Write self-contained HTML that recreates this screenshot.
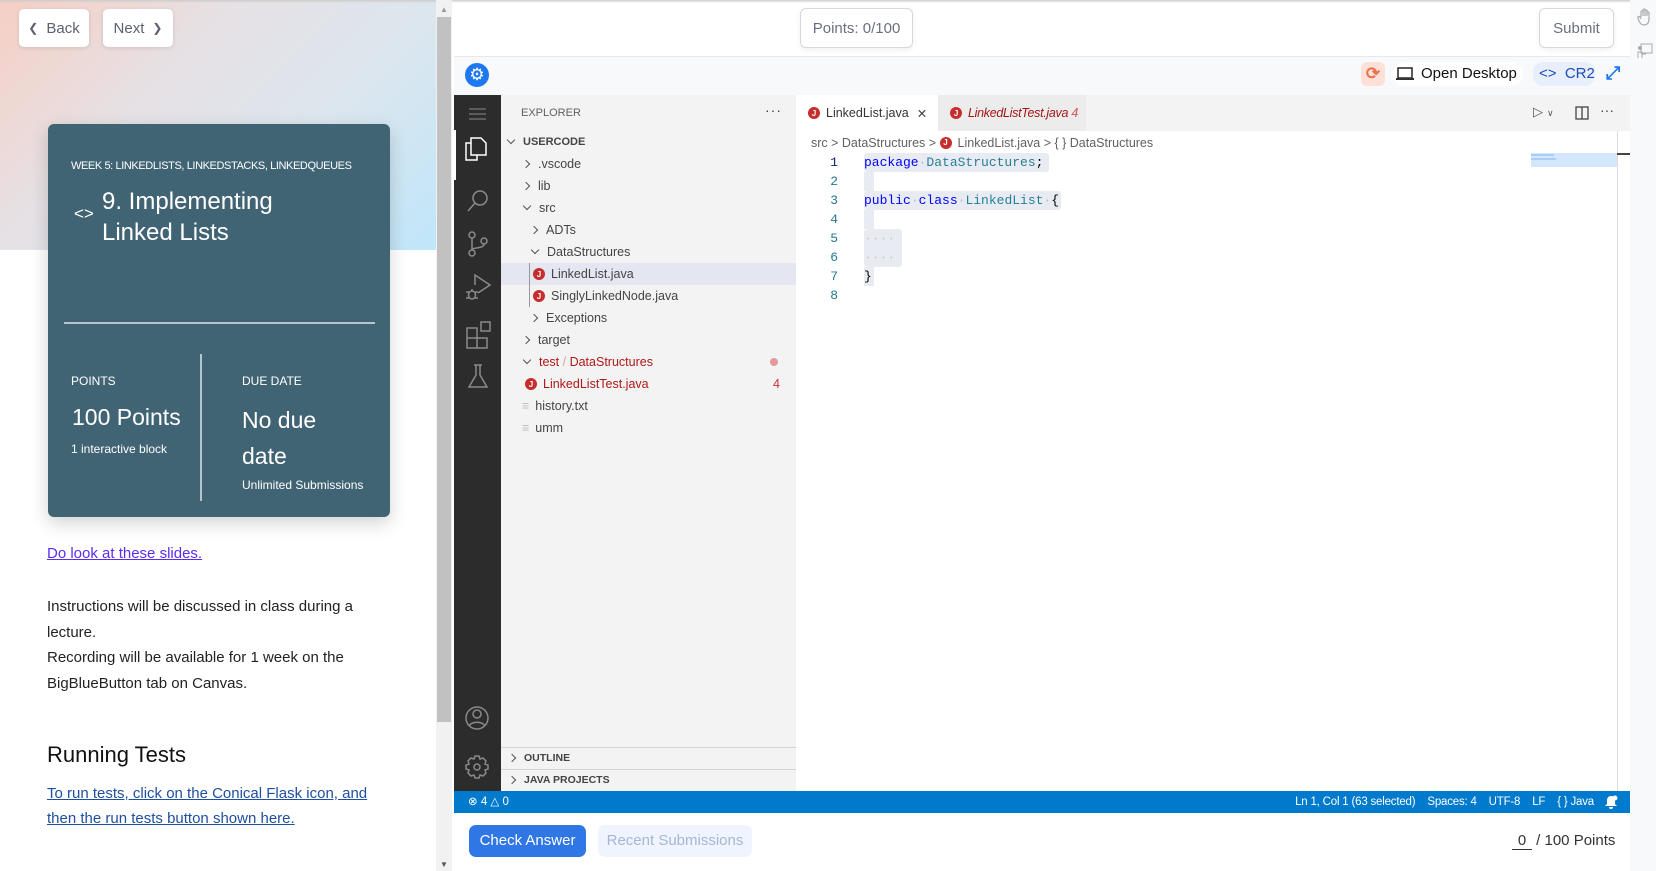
<!DOCTYPE html>
<html><head><meta charset="utf-8"><style>
*{box-sizing:border-box;margin:0;padding:0}
body{width:1656px;height:871px;overflow:hidden;font-family:"Liberation Sans",sans-serif;background:#fff;position:relative}
.a{position:absolute}
.btn{position:absolute;background:#fff;border-radius:5px;box-shadow:0 1px 4px rgba(0,0,0,.12);font-size:15px;color:#5b6170;display:flex;align-items:center;justify-content:center}
.ob{position:absolute;border:1px solid #d6d8dc;border-radius:6px;background:#fff;font-size:15px;color:#6b7080;display:flex;align-items:center;justify-content:center;box-shadow:0 2px 6px rgba(0,0,0,.06)}
.card{color:#fff}
.tree div{position:absolute;font-size:12.5px;color:#444;white-space:nowrap;height:22px;display:flex;align-items:center}
.ji{display:inline-flex;align-items:center;justify-content:center;width:12px;height:12px;border-radius:50%;background:#c72d2d;color:#fff;font-size:8px;font-weight:bold;margin-right:6px;font-style:normal;flex:none}
.code div{position:absolute;font-family:"Liberation Mono",monospace;font-size:13px;height:19px;line-height:19px;white-space:pre}
.ln{color:#237893;width:20px;text-align:right}
.kw{color:#0000ff}.ty{color:#267f99}
.chev{display:inline-block;width:6px;height:6px;border-right:1.2px solid #555;border-bottom:1.2px solid #555;margin-right:9px;flex:none}
.r{transform:rotate(-45deg)}
.d{transform:rotate(45deg);margin-top:-4px}
.fl{display:flex;align-items:center}
</style></head><body>

<!-- left pane -->
<div class="a" style="left:0;top:0;width:436px;height:250px;background:linear-gradient(135deg,#f6cfc4 0%,#e6e1e4 35%,#dce6ee 65%,#bfe6fa 100%)"></div>
<div class="a" style="left:0;top:0;width:436px;height:3px;background:linear-gradient(#ccc,transparent)"></div>
<div class="btn" style="left:19px;top:9px;width:70px;height:38px"><span style="font-size:12px;margin-right:8px">&#10094;</span>Back</div>
<div class="btn" style="left:103px;top:9px;width:70px;height:38px">Next<span style="font-size:12px;margin-left:8px">&#10095;</span></div>

<div class="a card" style="left:48px;top:124px;width:342px;height:393px;background:#416475;border-radius:6px;box-shadow:0 6px 18px rgba(0,0,0,.18)">
 <div class="a" style="left:23px;top:36px;font-size:11px;letter-spacing:-.4px;white-space:nowrap">WEEK 5: LINKEDLISTS, LINKEDSTACKS, LINKEDQUEUES</div>
 <div class="a" style="left:26px;top:80px;font-size:17px">&lt;&gt;</div>
 <div class="a" style="left:54px;top:62px;font-size:24px;line-height:31px">9. Implementing<br>Linked Lists</div>
 <div class="a" style="left:16px;top:198px;width:311px;height:2px;background:#b8c4cc"></div>
 <div class="a" style="left:152px;top:230px;width:2px;height:147px;background:#b8c4cc"></div>
 <div class="a" style="left:23px;top:250px;font-size:12px">POINTS</div>
 <div class="a" style="left:24px;top:280px;font-size:23px">100 Points</div>
 <div class="a" style="left:23px;top:318px;font-size:12px">1 interactive block</div>
 <div class="a" style="left:194px;top:250px;font-size:12px">DUE DATE</div>
 <div class="a" style="left:194px;top:278px;font-size:23px;line-height:36px">No due<br>date</div>
 <div class="a" style="left:194px;top:354px;font-size:12px">Unlimited Submissions</div>
</div>

<div class="a" style="left:47px;top:545px;font-size:15px;color:#5b2cf0;text-decoration:underline">Do look at these slides.</div>
<div class="a" style="left:47px;top:594px;font-size:15px;line-height:25.5px;color:#222;width:340px">Instructions will be discussed in class during a lecture.<br>Recording will be available for 1 week on the BigBlueButton tab on Canvas.</div>
<div class="a" style="left:47px;top:742px;font-size:22px;color:#111">Running Tests</div>
<div class="a" style="left:47px;top:781px;font-size:15px;line-height:25px;color:#1f4fa0;text-decoration:underline;width:330px">To run tests, click on the Conical Flask icon, and then the run tests button shown here.</div>

<div class="a" style="left:436px;top:0;width:16px;height:871px;background:#f1f1f1"></div>
<div class="a" style="left:437px;top:17px;width:14px;height:705px;background:#c1c1c1"></div>
<div class="a" style="left:440px;top:5px;font-size:8px;color:#999">&#9650;</div>
<div class="a" style="left:440px;top:860px;font-size:8px;color:#555">&#9660;</div>

<!-- right pane -->
<div class="a" style="left:452px;top:0;width:1178px;height:3px;background:linear-gradient(#ccc,transparent)"></div>
<div class="ob" style="left:800px;top:8px;width:113px;height:40px">Points: 0/100</div>
<div class="ob" style="left:1539px;top:8px;width:75px;height:40px">Submit</div>
<div class="a" style="left:454px;top:56px;width:1176px;height:1px;background:#e8e8ea"></div>
<div class="a" style="left:454px;top:57px;width:1176px;height:38px;background:#f8f9fa"></div>
<div class="a" style="left:465px;top:63px;width:24px;height:24px;border-radius:50%;background:#1e78f0;color:#fff;font-size:17px;line-height:24px;text-align:center">&#9881;</div>
<div class="a" style="left:1361px;top:62px;width:24px;height:24px;border-radius:6px;background:#fde0d8;color:#e8734e;font-size:17px;text-align:center;line-height:24px;font-weight:bold">&#10227;</div>
<div class="a" style="left:1393px;top:62px;width:130px;height:24px;background:#fff;border-radius:12px"></div>
<svg class="a" style="left:1396px;top:67px" width="18" height="14"><rect x="2" y="1" width="14" height="10" fill="none" stroke="#333" stroke-width="1.6"/><rect x="0" y="11" width="18" height="2" fill="#333"/></svg>
<div class="a" style="left:1421px;top:65px;font-size:15px;color:#111">Open Desktop</div>
<div class="a" style="left:1533px;top:62px;width:62px;height:24px;background:#e8eefc;border-radius:10px;font-size:15px;color:#1b4fb8;line-height:24px;padding-left:6px">&lt;&gt;&nbsp; CR2</div>
<div class="a" style="left:1606px;top:63px;font-size:18px;color:#1e78f0;font-weight:bold">&#10530;</div>

<!-- right strip -->
<div class="a" style="left:1630px;top:0;width:26px;height:871px;background:#f8f9fa"></div>
<svg class="a" style="left:1637px;top:8px" width="16" height="18" fill="none" stroke="#aaa" stroke-width="1.2"><path d="M4 9V4a1 1 0 012 0v4M6 8V2a1 1 0 012 0v6M8 8V3a1 1 0 012 0v5M10 8V5a1 1 0 012 0v6c0 4-2 6-5 6s-4-2-5-4l-1-3a1 1 0 012-1l1 2"/></svg>
<svg class="a" style="left:1637px;top:43px" width="16" height="16"><rect x="4" y="1" width="11" height="9" fill="none" stroke="#aaa"/><circle cx="3" cy="5" r="2" fill="#aaa"/><path d="M1 15V9h4v6M5 11h4" stroke="#aaa" fill="none"/></svg>

<!-- activity bar -->
<div class="a" style="left:454px;top:95px;width:47px;height:696px;background:#2c2c2c"></div>
<div class="a" style="left:454px;top:130px;width:2px;height:50px;background:#fff"></div>
<svg class="a" style="left:454px;top:95px" width="47" height="696" fill="none" stroke="#8a8a8a" stroke-width="1.5">
<path d="M15 14h17M15 19h17M15 24h17" stroke-width="1"/>
<path d="M17 48h-5v17h11v-5M17 43h10l5 5v12H17z" stroke="#fff"/>
<circle cx="26" cy="103" r="7"/><path d="M21 108l-7 8"/>
<circle cx="18" cy="140" r="3"/><circle cx="18" cy="158" r="3"/><circle cx="30" cy="146" r="3"/><path d="M18 143v12M30 149c0 5-12 3-12 6"/>
<path d="M21 190v-10l15 10-12 8"/><ellipse cx="18" cy="200" rx="3.5" ry="4"/><path d="M12 197h3M12 203h3M21 197h3M21 203h3M18 196v-2"/>
<path d="M13 233h10v10H13zM13 243h10v10H13zM23 243h10v10H23zM27 227h9v9h-9z"/>
<path d="M20 270h8M22 270v10l-7 12h18l-7-12v-10"/>
<circle cx="23" cy="623" r="11"/><circle cx="23" cy="619" r="4"/><path d="M15 631c3-5 13-5 16 0"/>
<circle cx="23" cy="672" r="3"/><path d="M21 661h4l1 3 3-1 3 3-1 3 3 1v4l-3 1 1 3-3 3-3-1-1 3h-4l-1-3-3 1-3-3 1-3-3-1v-4l3-1-1-3 3-3 3 1z"/>
</svg>

<!-- explorer -->
<div class="a" style="left:501px;top:95px;width:295px;height:696px;background:#f3f3f3"></div>
<div class="a" style="left:521px;top:107px;font-size:11px;color:#616161">EXPLORER</div>
<div class="a" style="left:765px;top:102px;font-size:14px;color:#424242;letter-spacing:1px">···</div>
<div class="a" style="left:501px;top:263px;width:295px;height:22px;background:#e4e6f1"></div>
<div class="a" style="left:529px;top:263px;width:1px;height:44px;background:#999"></div>
<div class="tree">
<div style="left:508px;top:131px;font-weight:bold;font-size:11px;color:#444"><span class="chev d"></span>USERCODE</div>
<div style="left:523px;top:153px"><span class="chev r"></span>.vscode</div>
<div style="left:523px;top:175px"><span class="chev r"></span>lib</div>
<div style="left:524px;top:197px"><span class="chev d"></span>src</div>
<div style="left:531px;top:219px"><span class="chev r"></span>ADTs</div>
<div style="left:532px;top:241px"><span class="chev d"></span>DataStructures</div>
<div style="left:533px;top:263px"><span class="ji">J</span>LinkedList.java</div>
<div style="left:533px;top:285px"><span class="ji">J</span>SinglyLinkedNode.java</div>
<div style="left:531px;top:307px"><span class="chev r"></span>Exceptions</div>
<div style="left:523px;top:329px"><span class="chev r"></span>target</div>
<div style="left:524px;top:351px;color:#b01818"><span class="chev d"></span>test&nbsp;<span style="color:#d9a0a0">/</span>&nbsp;DataStructures</div>
<div style="left:525px;top:373px;color:#b01818"><span class="ji">J</span>LinkedListTest.java</div>
<div style="left:522px;top:395px"><span style="color:#bbb;margin-right:6px">&#8801;</span>history.txt</div>
<div style="left:522px;top:417px"><span style="color:#bbb;margin-right:6px">&#8801;</span>umm</div>
</div>
<div class="a" style="left:770px;top:358px;width:8px;height:8px;border-radius:50%;background:#e39a9a"></div>
<div class="a" style="left:773px;top:373px;font-size:12.5px;color:#c33;line-height:22px">4</div>
<div class="a" style="left:501px;top:747px;width:295px;height:1px;background:#d4d4d4"></div>
<div class="a" style="left:501px;top:769px;width:295px;height:1px;background:#d4d4d4"></div>
<div class="a fl" style="left:509px;top:747px;height:22px;font-size:10.5px;font-weight:bold;color:#444"><span class="chev r"></span>OUTLINE</div>
<div class="a fl" style="left:509px;top:769px;height:22px;font-size:10.5px;font-weight:bold;color:#444"><span class="chev r"></span>JAVA PROJECTS</div>

<!-- editor -->
<div class="a" style="left:796px;top:95px;width:834px;height:36px;background:#f3f3f3"></div>
<div class="a fl" style="left:796px;top:95px;width:142px;height:36px;background:#fff;font-size:12.5px;color:#333;padding-left:12px"><span class="ji">J</span>LinkedList.java <span style="margin-left:8px;color:#444">&#10005;</span></div>
<div class="a fl" style="left:938px;top:95px;width:148px;height:36px;background:#ececec;font-size:12.5px;color:#a31515;font-style:italic;padding-left:12px;white-space:nowrap;letter-spacing:-.3px"><span class="ji">J</span>LinkedListTest.java&nbsp;<span style="color:#c55">4</span></div>
<div class="a" style="left:1533px;top:104px;font-size:13px;color:#555">&#9655;<span style="font-size:9px;margin-left:4px">&#8744;</span></div>
<svg class="a" style="left:1575px;top:106px" width="14" height="14"><rect x="1" y="1" width="12" height="12" fill="none" stroke="#444" stroke-width="1.3"/><path d="M7 1v12" stroke="#444" stroke-width="1.3"/></svg>
<div class="a" style="left:1600px;top:102px;font-size:14px;color:#444">···</div>
<div class="a fl" style="left:811px;top:134px;height:17px;font-size:12.5px;color:#616161;white-space:pre">src &gt; DataStructures &gt; <span class="ji">J</span>LinkedList.java &gt; { } DataStructures</div>

<div class="a" style="left:864px;top:153px;width:185px;height:19px;background:#e8ecf2;border-radius:3px"></div>
<div class="a" style="left:864px;top:172px;width:10px;height:19px;background:#e8ecf2"></div>
<div class="a" style="left:864px;top:191px;width:197px;height:19px;background:#e8ecf2;border-radius:3px"></div>
<div class="a" style="left:864px;top:210px;width:10px;height:19px;background:#e8ecf2"></div>
<div class="a" style="left:864px;top:229px;width:38px;height:38px;background:#e8ecf2;border-radius:3px"></div>
<div class="a" style="left:864px;top:267px;width:10px;height:19px;background:#e8ecf2"></div>
<div class="code">
<div class="ln" style="left:818px;top:153px;color:#0b216f">1</div><div style="left:864px;top:153px"><span class="kw">package</span><span style="color:#bbb">·</span><span class="ty">DataStructures</span>;</div>
<div class="ln" style="left:818px;top:172px">2</div>
<div class="ln" style="left:818px;top:191px">3</div><div style="left:864px;top:191px"><span class="kw">public</span><span style="color:#bbb">·</span><span class="kw">class</span><span style="color:#bbb">·</span><span class="ty">LinkedList</span><span style="color:#bbb">·</span>{</div>
<div class="ln" style="left:818px;top:210px">4</div>
<div class="ln" style="left:818px;top:229px">5</div><div style="left:864px;top:229px;color:#c8c8c8">····</div>
<div class="ln" style="left:818px;top:248px">6</div><div style="left:864px;top:248px;color:#c8c8c8">····</div>
<div class="ln" style="left:818px;top:267px">7</div><div style="left:864px;top:267px">}</div>
<div class="ln" style="left:818px;top:286px">8</div>
</div>
<div class="a" style="left:1531px;top:153px;width:86px;height:14px;background:#d3e6fd"></div>
<div class="a" style="left:1531px;top:154px;width:23px;height:2px;background:#a9cdf7"></div>
<div class="a" style="left:1531px;top:158px;width:25px;height:2px;background:#a9cdf7"></div>
<div class="a" style="left:1617px;top:131px;width:1px;height:660px;background:#ddd"></div>
<div class="a" style="left:1617px;top:153px;width:13px;height:2px;background:#444"></div>

<!-- status bar -->
<div class="a" style="left:454px;top:791px;width:1176px;height:22px;background:#007acc;color:#fff;font-size:11.5px;line-height:22px">
 <span class="a" style="left:14px">&#8855; 4 &#9651; 0</span>
 <span class="a" style="right:36px;white-space:nowrap;letter-spacing:-.2px">Ln 1, Col 1 (63 selected)&nbsp;&nbsp;&nbsp; Spaces: 4&nbsp;&nbsp;&nbsp; UTF-8&nbsp;&nbsp;&nbsp; LF&nbsp;&nbsp;&nbsp; { } Java</span>
 <svg class="a" style="left:1150px;top:4px" width="14" height="14" fill="#fff"><path d="M7 1a4 4 0 014 4v4l2 2H1l2-2V5a4 4 0 014-4zM5 12h4a2 2 0 01-4 0z"/><circle cx="11" cy="3" r="2.5"/></svg>
</div>

<div class="a" style="left:469px;top:825px;width:117px;height:32px;background:#2f77e4;border-radius:7px;color:#fff;font-size:15px;line-height:32px;text-align:center">Check Answer</div>
<div class="a" style="left:598px;top:825px;width:154px;height:32px;background:#f0f4ff;border-radius:7px;color:#a6b6d4;font-size:15px;line-height:32px;text-align:center">Recent Submissions</div>
<div class="a" style="left:1512px;top:832px;font-size:15px;color:#333"><span style="display:inline-block;width:20px;border-bottom:1px solid #333;text-align:center">0</span> / 100 Points</div>
</body></html>
